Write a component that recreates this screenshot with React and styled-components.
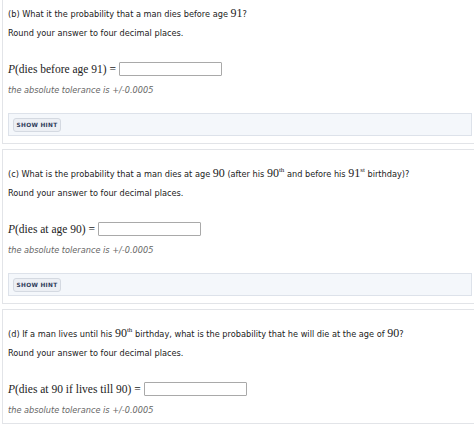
import React from 'react';
import styled, { createGlobalStyle } from 'styled-components';

const Global = createGlobalStyle`
  body {
    margin: 0;
    background: #fff;
    font-family: "DejaVu Sans", Verdana, sans-serif;
    color: #222;
    overflow: hidden;
  }
`;

// the screenshot is scrolled a little into the first panel
const Page = styled.div`
  width: 474px;
  margin-top: -11px;
  padding-left: 2px;
  box-sizing: border-box;
`;

const Panel = styled.div`
  box-sizing: border-box;
  width: 480px;
  border: 1px solid #e2e4e8;
  border-right: none;
  padding: 17px 0 7px 5px;
  margin-bottom: 5px;
`;

const Question = styled.div`
  font-size: 8.2px;
  line-height: 14px;
`;

const Note = styled.div`
  font-size: 8.2px;
  line-height: 14px;
  margin-top: 5px;
`;

const Num = styled.span`
  font-family: "Liberation Serif", "Times New Roman", serif;
  font-size: 12px;
  line-height: 0;
`;

const Sup = styled.sup`
  font-family: "Liberation Serif", "Times New Roman", serif;
  font-size: 7px;
  vertical-align: 5px;
  line-height: 0;
`;

const AnswerRow = styled.div`
  display: flex;
  align-items: center;
  gap: 3px;
  margin-top: 21px;
  height: 16px;
`;

const MathLabel = styled.span`
  font-family: "Liberation Serif", "Times New Roman", serif;
  font-size: 11.5px;
  color: #222;
  white-space: nowrap;

  i {
    font-style: italic;
  }
`;

const Input = styled.div`
  box-sizing: border-box;
  width: 103px;
  height: 14px;
  border: 1px solid #a9a9a9;
  border-radius: 1px;
  background: #fff;
`;

const Tolerance = styled.div`
  font-size: 8.2px;
  font-style: italic;
  color: #666;
  line-height: 12px;
  margin-top: 7px;
`;

const HintBar = styled.div`
  box-sizing: border-box;
  width: 464px;
  height: 23px;
  margin-top: 17px;
  background: #f4f7fb;
  border: 1px solid #dde2ea;
  padding: 0 4px;
  display: flex;
  align-items: center;
`;

const HintButton = styled.div`
  box-sizing: border-box;
  height: 14px;
  width: 48px;
  justify-content: center;
  border: 1px solid #d4d9e1;
  border-radius: 3px;
  background: #eceff4;
  font-size: 5.8px;
  font-weight: bold;
  letter-spacing: 0.3px;
  color: #2c3b5a;
  display: flex;
  align-items: center;
`;

const parts = [
  {
    id: 'b',
    question: (
      <>
        (b) What it the probability that a man dies before age <Num>91</Num>?
      </>
    ),
    label: (
      <>
        <i>P</i>(dies before age 91) =
      </>
    ),
    hint: true,
  },
  {
    id: 'c',
    question: (
      <>
        (c) What is the probability that a man dies at age <Num>90</Num> (after his{' '}
        <Num>90</Num>
        <Sup>th</Sup> and before his <Num>91</Num>
        <Sup>st</Sup> birthday)?
      </>
    ),
    label: (
      <>
        <i>P</i>(dies at age 90) =
      </>
    ),
    hint: true,
  },
  {
    id: 'd',
    question: (
      <>
        (d) If a man lives until his <Num>90</Num>
        <Sup>th</Sup> birthday, what is the probability that he will die at the age of{' '}
        <Num>90</Num>?
      </>
    ),
    label: (
      <>
        <i>P</i>(dies at 90 if lives till 90) =
      </>
    ),
    hint: false,
  },
];

const App = () => (
  <Page>
    <Global />
    {parts.map((part) => (
      <Panel key={part.id}>
        <Question>{part.question}</Question>
        <Note>Round your answer to four decimal places.</Note>
        <AnswerRow>
          <MathLabel>{part.label}</MathLabel>
          <Input />
        </AnswerRow>
        <Tolerance>the absolute tolerance is +/-0.0005</Tolerance>
        {part.hint && (
          <HintBar>
            <HintButton>SHOW HINT</HintButton>
          </HintBar>
        )}
      </Panel>
    ))}
  </Page>
);

export default App;
